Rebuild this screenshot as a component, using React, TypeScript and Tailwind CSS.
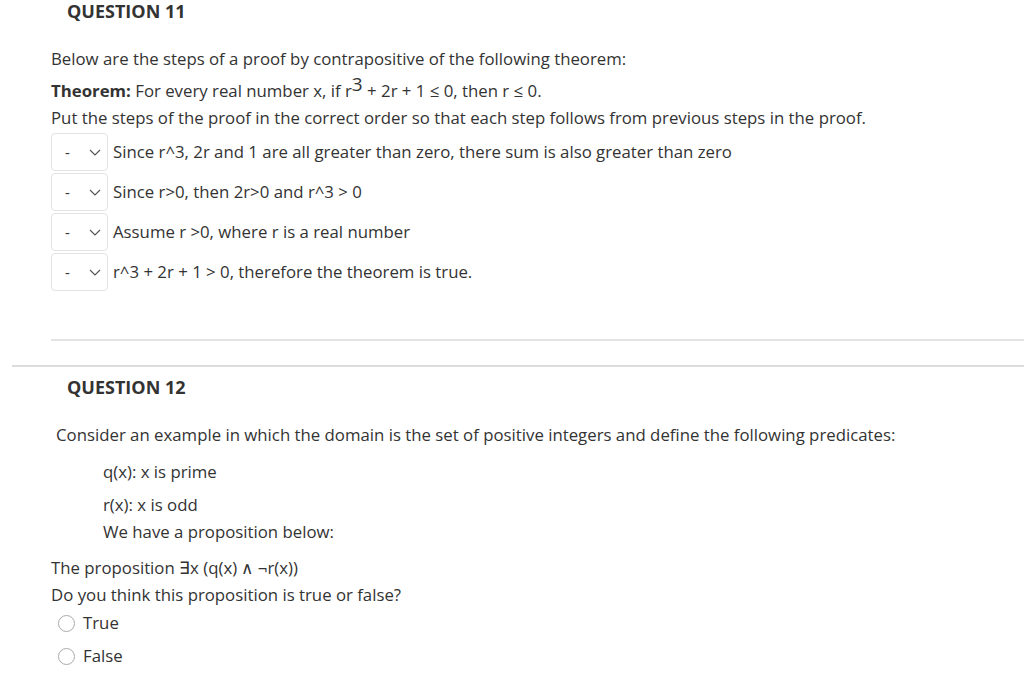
const steps = [
  "Since r^3, 2r and 1 are all greater than zero, there sum is also greater than zero",
  "Since r>0, then 2r>0 and r^3 > 0",
  "Assume r >0, where r is a real number",
  "r^3 + 2r + 1 > 0, therefore the theorem is true.",
];

function StepSelect({ label }: { label: string }) {
  return (
    <div className="flex h-10 items-center">
      <div className="flex h-[38px] w-[57px] shrink-0 items-center justify-between rounded-[4px] border border-[#e3e3e3] bg-white pl-[13px] pr-[6px] text-[15px]">
        <span>-</span>
        <svg width="12" height="7" viewBox="0 0 12 7" className="mt-[1px]">
          <polyline points="1,1 6,6 11,1" fill="none" stroke="#555" strokeWidth="1.2" />
        </svg>
      </div>
      <span className="ml-[5px]">{label}</span>
    </div>
  );
}

function Radio({ label }: { label: string }) {
  return (
    <div className="flex items-center">
      <span className="ml-[7px] inline-block h-[17px] w-[17px] rounded-full border border-[#aaa] bg-white" />
      <span className="ml-[8px]">{label}</span>
    </div>
  );
}

export default function App() {
  return (
    <div className="min-h-[696px] bg-white text-[16.8px] text-[#333] [font-family:'Open_Sans',sans-serif]">
      <h2 className="pl-[67px] pt-0 text-[18px] font-bold leading-[22px] text-[#333]">QUESTION 11</h2>

      <div className="pl-[51px] pt-[26px]">
        <p className="leading-[22px]">Below are the steps of a proof by contrapositive of the following theorem:</p>
        <p className="mt-[10px] leading-[22px]">
          <b>Theorem:</b> For every real number x, if r
          <sup className="relative -top-[6px] align-baseline text-[19px] leading-none">3</sup> + 2r + 1 ≤ 0, then r ≤ 0.
        </p>
        <p className="mt-[5px] leading-[22px]">
          Put the steps of the proof in the correct order so that each step follows from previous steps in the proof.
        </p>
        <div className="mt-[3px]">
          {steps.map((s) => (
            <StepSelect key={s} label={s} />
          ))}
        </div>
      </div>

      <div className="ml-[51px] mt-[47px] h-[2px] bg-[#e4e4e4]" />
      <div className="ml-[12px] mt-[24px] h-[2px] bg-[#dcdcdc]" />

      <h2 className="mt-[9px] pl-[67px] text-[18px] font-bold leading-[22px]">QUESTION 12</h2>

      <p className="mt-[26px] pl-[56px] leading-[22px]">
        Consider an example in which the domain is the set of positive integers and define the following predicates:
      </p>
      <div className="pl-[103px]">
        <p className="mt-[15px] leading-[22px]">q(x): x is prime</p>
        <p className="mt-[11px] leading-[22px]">r(x): x is odd</p>
        <p className="mt-[5px] leading-[22px]">We have a proposition below:</p>
      </div>
      <div className="pl-[51px]">
        <p className="mt-[14px] leading-[22px]">The proposition ∃x (q(x) ∧ ¬r(x))</p>
        <p className="mt-[5px] leading-[22px]">Do you think this proposition is true or false?</p>
        <div className="mt-[6px] flex flex-col gap-[11px] leading-[22px]">
          <Radio label="True" />
          <Radio label="False" />
        </div>
      </div>
    </div>
  );
}
